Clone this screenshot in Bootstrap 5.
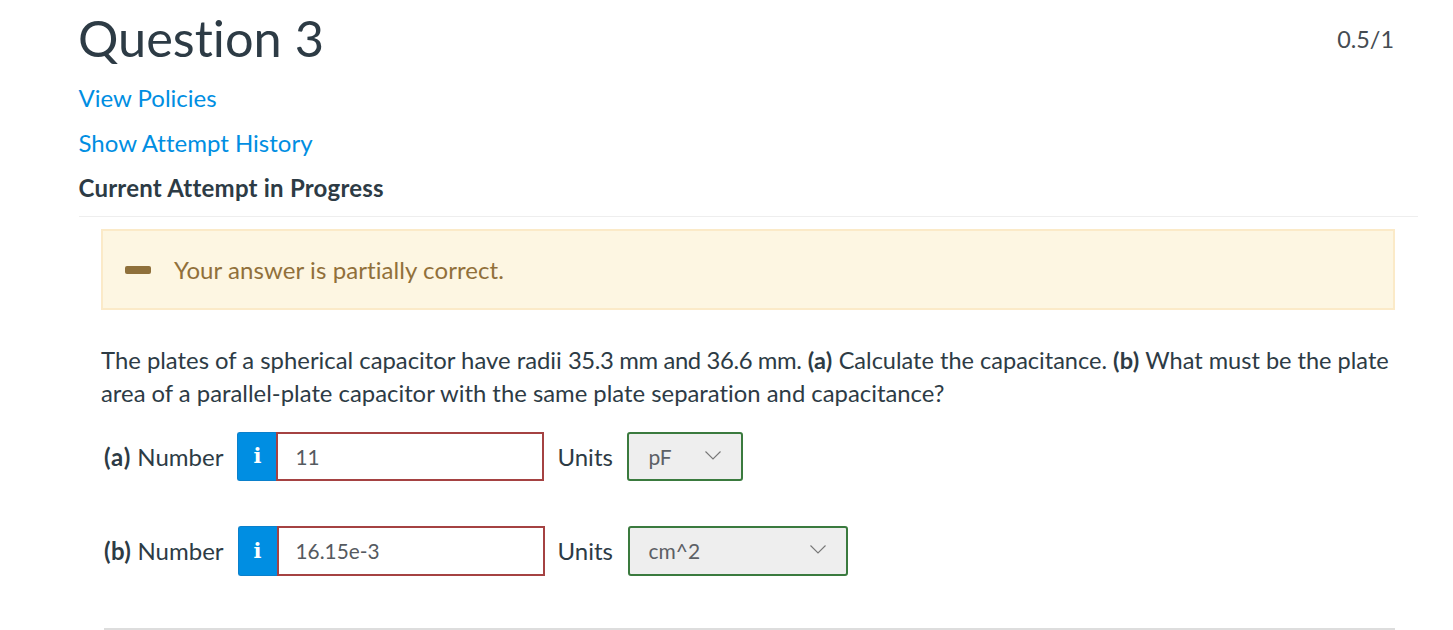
<!DOCTYPE html>
<html lang="en">
<head>
<meta charset="utf-8">
<title>Question 3</title>
<link href="https://cdn.jsdelivr.net/npm/bootstrap@5.3.0/dist/css/bootstrap.min.css" rel="stylesheet">
<style>
html,body{height:630px;overflow:hidden;background:#fff}
body{font-family:Lato,"Liberation Sans",sans-serif;color:#2d3b45;font-size:24px;line-height:33px;font-variant-ligatures:none}
.page-wrap{padding:0 35px 0 79px}
.q-head{height:80px}
.q-title{font-size:50.5px;line-height:58px;margin:9px 0 0 -1px;font-weight:400;color:#2d3b45}
.q-score{font-size:23.4px;color:#454c52;line-height:30px;margin:24px 24px 0 0}
.q-link{display:block;color:#008ee2;text-decoration:none;height:45px;line-height:35px;margin-left:-.5px}
.q-cur{font-weight:700;height:46px;line-height:35px;letter-spacing:.22px;margin-left:-.5px}
.q-rule{height:1px;background:#eeeeee}
.q-body{padding:12px 23px 0 22px}
.q-alert{height:81px;background:#fdf6e2;border:2px solid #fbeac8;color:#91703a;padding-left:22px;gap:23px;letter-spacing:.08px}
.q-dash{width:26px;height:8px;background:#8f703b;border-radius:2px;margin-top:1px}
.q-msg{margin-top:-1px}
.q-text{margin:33px 0 23px;font-size:23.85px}
.q-text b{letter-spacing:.3px}
.q-nums{letter-spacing:-.38px}
.q-rest{font-size:23.55px;line-height:1}
.q-row{height:49px;margin-left:3px;margin-bottom:45px}
.q-row-tall{height:50px}
.q-row b{letter-spacing:.9px}
.q-row-tall b{letter-spacing:.4px}
.q-row-tall .q-nudge{margin-top:-1px}
.q-info{width:39px;height:100%;background:#008ee2;border:1px solid #0b80cb;border-right:0;border-radius:3px 0 0 3px;color:#fff;font-family:"DejaVu Serif",serif;font-weight:700;font-size:21px;margin-left:14px;padding-bottom:2px}
.q-input{width:268px;height:100%;border:2px solid #a54242;padding-left:17px;color:#555a60;font-size:20.8px;line-height:45px}
.q-units{margin:0 14.5px 0 13px}
.q-sel{height:100%;background:#eeeeee;border:2px solid #3a7a3e;border-radius:3px;color:#5c6065;font-size:21px;padding:0 20px 0 19px}
.q-sel-a{width:116px}
.q-sel-b{width:220px}
.q-chev{margin-top:-3px}
.q-bottom{height:2px;background:#dddddd;margin:52px 0 0 3px}
</style>
</head>
<body>
<div class="page-wrap">
  <div class="q-head d-flex justify-content-between align-items-start">
    <h1 class="q-title">Question 3</h1>
    <div class="q-score">0.5/1</div>
  </div>
  <a class="q-link" href="#">View Policies</a>
  <a class="q-link" href="#">Show Attempt History</a>
  <div class="q-cur">Current Attempt in Progress</div>
  <div class="q-rule"></div>
  <div class="q-body">
    <div class="q-alert d-flex align-items-center"><span class="q-dash"></span><span class="q-msg">Your answer is partially correct.</span></div>
    <p class="q-text">The plates of a spherical capacitor have radii <span class="q-nums">35.3 mm and 36.6 mm.</span> <span class="q-rest"><b>(a)</b> Calculate the capacitance. <b>(b)</b> What must be the plate</span> area of a parallel-plate capacitor with the same plate separation and capacitance?</p>
    <div class="q-row d-flex align-items-center">
      <span><b>(a)</b> Number</span>
      <span class="q-info d-flex align-items-center justify-content-center">i</span>
      <span class="q-input">11</span>
      <span class="q-units">Units</span>
      <span class="q-sel q-sel-a d-flex align-items-center justify-content-between"><span>pF</span><svg class="q-chev" width="16" height="9" viewBox="0 0 16 9"><path d="M.5 .5 8 8 15.5 .5" fill="none" stroke="#777" stroke-width="1.1"/></svg></span>
    </div>
    <div class="q-row q-row-tall d-flex align-items-center">
      <span class="q-nudge"><b>(b)</b> Number</span>
      <span class="q-info d-flex align-items-center justify-content-center">i</span>
      <span class="q-input">16.15e-3</span>
      <span class="q-units q-nudge">Units</span>
      <span class="q-sel q-sel-b d-flex align-items-center justify-content-between"><span class="q-nudge">cm^2</span><svg class="q-chev" width="16" height="9" viewBox="0 0 16 9"><path d="M.5 .5 8 8 15.5 .5" fill="none" stroke="#777" stroke-width="1.1"/></svg></span>
    </div>
    <div class="q-bottom"></div>
  </div>
</div>
<script src="https://cdn.jsdelivr.net/npm/bootstrap@5.3.0/dist/js/bootstrap.bundle.min.js"></script>
</body>
</html>
